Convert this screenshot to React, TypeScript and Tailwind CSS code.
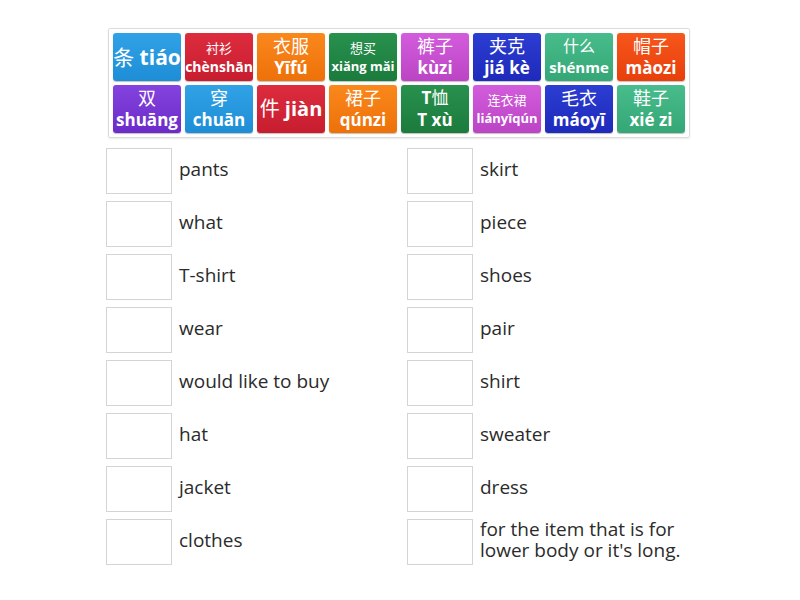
import React from 'react';

type Tile = {
  lines: string[];
  bg: string;
  sizes: string[];
};

const BLUE = 'from-[#31a2e6] to-[#1d8ed6]';
const RED = 'from-[#dd2c3e] to-[#c71d2f]';
const ORANGE = 'from-[#fa881c] to-[#ee7008]';
const GREEN = 'from-[#28914e] to-[#1b7b3c]';
const ORCHID = 'from-[#d25cdb] to-[#bb44c5]';
const NAVY = 'from-[#2c3dd2] to-[#1e2abb]';
const TEAL = 'from-[#48bc8c] to-[#35a777]';
const FIRE = 'from-[#f7561c] to-[#e73f0a]';
const PURPLE = 'from-[#8443de] to-[#6c2bc9]';

const tiles: Tile[] = [
  { lines: ['条 tiáo'], bg: BLUE, sizes: ['text-[21px] leading-[26px]'] },
  { lines: ['衬衫', 'chènshān'], bg: RED, sizes: ['text-[13px] leading-[18px]', 'text-[14px] leading-[19px]'] },
  { lines: ['衣服', 'Yīfú'], bg: ORANGE, sizes: ['text-[18px] leading-[22px]', 'text-[17px] leading-[22px]'] },
  { lines: ['想买', 'xiăng măi'], bg: GREEN, sizes: ['text-[13px] leading-[18px]', 'text-[13px] leading-[19px]'] },
  { lines: ['裤子', 'kùzi'], bg: ORCHID, sizes: ['text-[18px] leading-[22px]', 'text-[17px] leading-[22px]'] },
  { lines: ['夹克', 'jiá kè'], bg: NAVY, sizes: ['text-[18px] leading-[22px]', 'text-[17px] leading-[22px]'] },
  { lines: ['什么', 'shénme'], bg: TEAL, sizes: ['text-[16px] leading-[21px]', 'text-[15px] leading-[21px]'] },
  { lines: ['帽子', 'màozi'], bg: FIRE, sizes: ['text-[18px] leading-[22px]', 'text-[17px] leading-[22px]'] },
  { lines: ['双', 'shuāng'], bg: PURPLE, sizes: ['text-[18px] leading-[22px]', 'text-[17px] leading-[22px]'] },
  { lines: ['穿', 'chuān'], bg: BLUE, sizes: ['text-[18px] leading-[22px]', 'text-[17px] leading-[22px]'] },
  { lines: ['件 jiàn'], bg: RED, sizes: ['text-[20px] leading-[26px]'] },
  { lines: ['裙子', 'qúnzi'], bg: ORANGE, sizes: ['text-[18px] leading-[22px]', 'text-[17px] leading-[22px]'] },
  { lines: ['T恤', 'T xù'], bg: GREEN, sizes: ['text-[17px] leading-[22px]', 'text-[17px] leading-[22px]'] },
  { lines: ['连衣裙', 'liányīqún'], bg: ORCHID, sizes: ['text-[13px] leading-[18px]', 'text-[13px] leading-[19px]'] },
  { lines: ['毛衣', 'máoyī'], bg: NAVY, sizes: ['text-[18px] leading-[22px]', 'text-[17px] leading-[22px]'] },
  { lines: ['鞋子', 'xié zi'], bg: TEAL, sizes: ['text-[18px] leading-[22px]', 'text-[17px] leading-[22px]'] },
];

const leftItems = ['pants', 'what', 'T-shirt', 'wear', 'would like to buy', 'hat', 'jacket', 'clothes'];
const rightItems = [
  'skirt',
  'piece',
  'shoes',
  'pair',
  'shirt',
  'sweater',
  'dress',
  "for the item that is for lower body or it's long.",
];

const cjk = /([\u4e00-\u9fff]+)/;

function TileText({ text }: { text: string }) {
  // chinese glyphs look regular weight in the original
  const parts = text.split(cjk);
  return (
    <>
      {parts.map((p, i) =>
        cjk.test(p) ? (
          <span key={i} className="font-normal">
            {p}
          </span>
        ) : (
          <span key={i}>{p}</span>
        ),
      )}
    </>
  );
}

function TileCard({ tile }: { tile: Tile }) {
  return (
    <div
      className={`flex h-[48px] flex-col items-center justify-center overflow-hidden rounded-[3px] bg-linear-to-b ${tile.bg} text-center font-bold text-white shadow-[0_1px_1px_rgba(0,0,0,0.25)]`}
    >
      {tile.lines.map((line, i) => (
        <div key={i} className={`${tile.sizes[i]} whitespace-nowrap`}>
          <TileText text={line} />
        </div>
      ))}
    </div>
  );
}

function MatchRow({ label }: { label: string }) {
  return (
    <div className="flex h-[46px] items-center">
      <div className="h-[46px] w-[66px] shrink-0 border border-[#d4d4d4] bg-white" />
      <span className="max-w-[220px] pb-[4px] pl-[7px] text-[19px] leading-[21px] text-[#2b2b2b]">{label}</span>
    </div>
  );
}

export default function App() {
  return (
    <div
      className="h-[600px] w-[800px] bg-white pt-[28px]"
      style={{ fontFamily: '"Open Sans", "Noto Sans CJK SC", sans-serif' }}
    >
      <div className="ml-[108px] w-[582px] rounded-[2px] border border-[#dcdcdc] p-[4px] shadow-[0_1px_2px_rgba(0,0,0,0.08)]">
        <div className="grid grid-cols-8 gap-[4px]">
          {tiles.map((t, i) => (
            <TileCard key={i} tile={t} />
          ))}
        </div>
      </div>

      <div className="ml-[106px] mt-[10px] grid grid-cols-[301px_290px]">
        <div className="flex flex-col gap-[7px]">
          {leftItems.map((l) => (
            <MatchRow key={l} label={l} />
          ))}
        </div>
        <div className="flex flex-col gap-[7px]">
          {rightItems.map((l) => (
            <MatchRow key={l} label={l} />
          ))}
        </div>
      </div>
    </div>
  );
}
